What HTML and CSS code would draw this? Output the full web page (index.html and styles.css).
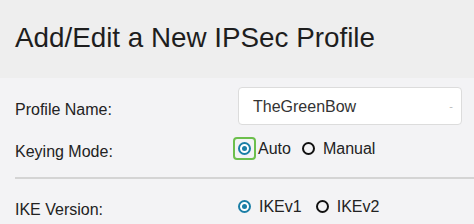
FILE: index.html
```html
<!DOCTYPE html>
<html lang="en">
  <head>
    <meta charset="UTF-8" />
    <meta name="viewport" content="width=device-width, initial-scale=1.0" />
    <title>Add/Edit a New IPSec Profile</title>
    <link rel="stylesheet" href="styles.css">
  </head>
  <body>
    <div class="page-header">
      <h1>Add/Edit a New IPSec Profile</h1>
    </div>

    <div class="form">
      <div class="row row-name">
        <label class="label" for="profileName">Profile Name:</label>
        <div class="text-box">
          <span id="profileName" class="text-value">TheGreenBow</span>
          <span class="text-dash">-</span>
        </div>
      </div>

      <div class="row row-mode">
        <span class="label">Keying Mode:</span>
        <div class="options">
          <span class="option">
            <span class="focus-ring"><span class="radio checked"></span></span>
            <span class="option-text">Auto</span>
          </span>
          <span class="option">
            <span class="radio"></span>
            <span class="option-text">Manual</span>
          </span>
        </div>
      </div>

      <hr class="divider" />

      <div class="row row-ike">
        <span class="label">IKE Version:</span>
        <div class="options">
          <span class="option">
            <span class="radio checked"></span>
            <span class="option-text">IKEv1</span>
          </span>
          <span class="option">
            <span class="radio"></span>
            <span class="option-text">IKEv2</span>
          </span>
        </div>
      </div>
    </div>
  </body>
</html>
```

FILE: styles.css
```css
body {
  font-family: "Liberation Sans", Arial, sans-serif;
  margin: 0;
  background-color: #f3f3f5;
  color: #222;
  overflow: hidden;
}

.page-header {
  background-color: #eeeeee;
  height: 78px;
  padding-left: 15px;
  display: flex;
  align-items: center;
}

.page-header h1 {
  margin: 0;
  margin-top: -3px;
  font-size: 27.8px;
  font-weight: normal;
  color: #1e1e1e;
}

.form {
  padding-left: 15px;
}

.row {
  display: flex;
  align-items: center;
}

.label {
  width: 223px;
  font-size: 16px;
  flex-shrink: 0;
}

.row-name {
  margin-top: 9px;
  height: 38px;
}

.row-name .label {
  padding-top: 7px;
}

.text-box {
  box-sizing: border-box;
  width: 224px;
  height: 38px;
  background-color: #fff;
  border: 1px solid #dcdcdc;
  border-radius: 4px;
  display: flex;
  align-items: center;
  justify-content: space-between;
  padding: 0 8px 0 14px;
}

.text-value {
  font-size: 16px;
  color: #333;
  padding-top: 2px;
}

.text-dash {
  font-size: 11px;
  color: #bbb;
}

.row-mode {
  height: 46px;
}

.row-mode .label {
  padding-top: 7px;
}

.row-ike {
  height: 54px;
}

.row-ike .label {
  padding-top: 8px;
}

.options {
  display: flex;
  align-items: center;
}

.option {
  display: flex;
  align-items: center;
  font-size: 16px;
}

.row-mode .option + .option {
  margin-left: 11px;
}

.row-ike .option + .option {
  margin-left: 14px;
}

.option-text {
  margin-left: 8px;
  padding-top: 2px;
}

.row-mode .option:first-child .option-text {
  margin-left: 7px;
}

.radio {
  width: 13px;
  height: 13px;
  border: 2px solid #111;
  border-radius: 50%;
  box-sizing: border-box;
  position: relative;
}

.radio.checked {
  border-color: #1a7ea6;
  background-color: #fff;
}

.radio.checked::after {
  content: "";
  position: absolute;
  top: 2px;
  left: 2px;
  width: 5px;
  height: 5px;
  border-radius: 50%;
  background-color: #1a7ea6;
}

.focus-ring {
  display: flex;
  padding: 3px;
  margin: 0 -5px;
  border: 2px solid #6cbf4c;
  border-radius: 4px;
}

.divider {
  border: none;
  height: 2px;
  background-color: #d4d4d4;
  margin: 6px 0 0 0;
}
```
